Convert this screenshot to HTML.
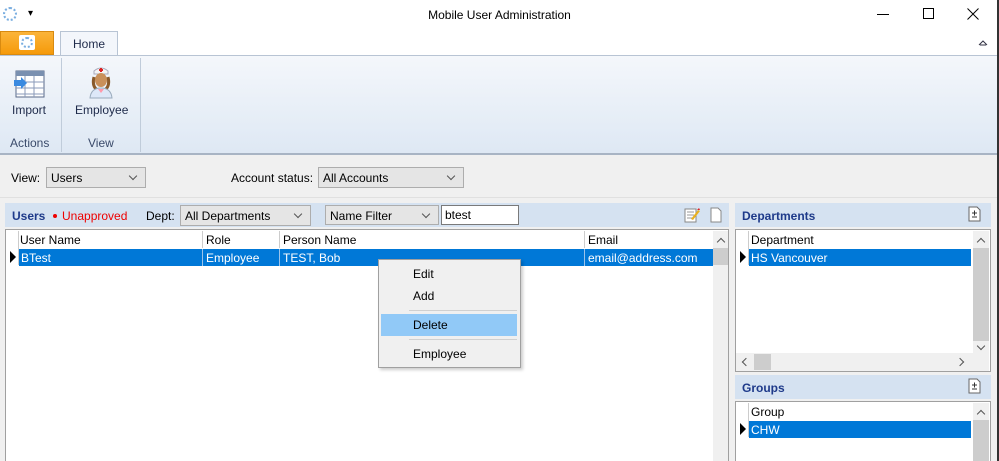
<!DOCTYPE html>
<html style="width:999px;height:461px;overflow:hidden"><head><style>
*{box-sizing:border-box;margin:0;padding:0}
body{width:999px;height:461px;overflow:hidden;background:#f0f0f0;font-family:"Liberation Sans",sans-serif;font-size:12px;color:#000;position:relative}
.a{position:absolute}
.combo{position:absolute;background:#e5e5e5;border:1px solid #adadad;padding:3px 4px;font-size:12px}
.combo:after{content:"";position:absolute;right:9px;top:5px;width:5px;height:5px;border-right:1px solid #555;border-bottom:1px solid #555;transform:rotate(45deg)}
.hdr{position:absolute;background:#d5e2f1;color:#1e3a8a;font-weight:bold;font-size:12px}
.grid{position:absolute;background:#fff;border:1px solid #a0a0a0}
.sel{position:absolute;background:#0078d7;color:#fff;height:17px;line-height:16px}
.arrow{position:absolute;width:0;height:0;border-top:6px solid transparent;border-bottom:6px solid transparent;border-left:6px solid #000}
.vs{position:absolute;background:#f0f0f0}
.up,.dn{position:absolute;width:6px;height:6px;border-left:1.5px solid #555;border-top:1.5px solid #555}
.up{transform:rotate(45deg)}
.dn{transform:rotate(225deg)}
.lt,.rt{position:absolute;width:6px;height:6px;border-left:1.5px solid #555;border-top:1.5px solid #555}
.lt{transform:rotate(-45deg)}
.rt{transform:rotate(135deg)}
</style></head><body>
<div class="a" style="left:0;top:0;width:999px;height:31px;background:#fff"></div>
<div class="a" style="left:3px;top:7px;width:14px;height:14px;border:2px dotted #7aaee0;border-radius:50%"></div>
<div class="a" style="left:28px;top:8px;font-size:10px">▾</div>
<div class="a" style="left:0;top:8px;width:999px;text-align:center;font-size:12px">Mobile User Administration</div>
<div class="a" style="left:877px;top:14px;width:12px;height:1px;background:#000"></div>
<div class="a" style="left:923px;top:8px;width:11px;height:11px;border:1px solid #000"></div>
<svg class="a" style="left:967px;top:8px" width="12" height="12"><path d="M0.5 0.5L11.5 11.5M11.5 0.5L0.5 11.5" stroke="#000"/></svg>
<div class="a" style="left:0;top:31px;width:999px;height:25px;background:#fff"></div>
<div class="a" style="left:0;top:31px;width:54px;height:24px;background:linear-gradient(#fbb43a,#f59a0a);border:1px solid #d88a10"></div>
<div class="a" style="left:19px;top:35px;width:16px;height:15px;background:#fff;border-radius:2px"><div style="margin:2px;width:12px;height:11px;border:2px dotted #7aaee0;border-radius:50%"></div></div>
<div class="a" style="left:60px;top:31px;width:58px;height:25px;background:#f3f6fb;border:1px solid #b8c4d4;border-bottom:none;text-align:center;line-height:24px;color:#1e2a4a;font-size:12px">Home</div>
<svg class="a" style="left:978px;top:39px" width="10" height="7"><path d="M1 6L5 2L9 6M2 6h6" stroke="#334" fill="none"/></svg>
<div class="a" style="left:0;top:55px;width:999px;height:100px;background:linear-gradient(#f4f7fb,#dee8f4);border-top:1px solid #b8c4d4;border-bottom:2px solid #a8b4c4"></div>
<div class="a" style="left:61px;top:58px;width:1px;height:94px;background:#c0ccda"></div>
<div class="a" style="left:140px;top:58px;width:1px;height:94px;background:#c0ccda"></div>
<svg class="a" style="left:13px;top:70px" width="33" height="28"><rect x="3" y="1" width="28" height="26" fill="#fff" stroke="#5a6a8a"/><rect x="3" y="1" width="28" height="5" fill="#7a90b0"/><path d="M3 12h28M3 18h28M3 24h28M12 6v21M21 6v21" stroke="#8a9ab8"/><path d="M1 10h7v-3l6 6-6 6v-3h-7z" fill="#3a8ae0"/></svg>
<div class="a" style="left:12px;top:103px;color:#1e2a4a">Import</div>
<div class="a" style="left:10px;top:136px;color:#3a4a6a">Actions</div>
<svg class="a" style="left:88px;top:65px" width="26" height="34"><path d="M6 6q7-6 14 0v3h-14z" fill="#f4f4f4" stroke="#aab"/><path d="M12 3h2v4h-2zM11 4h4v2h-4z" fill="#d22"/><ellipse cx="13" cy="15" rx="6" ry="7" fill="#c9905a"/><path d="M6 12q-2 8 2 12M20 12q2 8-2 12" stroke="#8a5a2a" stroke-width="3" fill="none"/><path d="M2 33q1-10 11-10 10 0 11 10z" fill="#dde8f8" stroke="#9ab"/><path d="M10 24l3 4 3-4" fill="#f9a"/></svg>
<div class="a" style="left:75px;top:103px;color:#1e2a4a">Employee</div>
<div class="a" style="left:88px;top:136px;color:#3a4a6a">View</div>
<div class="a" style="left:11px;top:171px">View:</div>
<div class="combo" style="left:46px;top:167px;width:100px;height:21px">Users</div>
<div class="a" style="left:231px;top:171px">Account status:</div>
<div class="combo" style="left:318px;top:167px;width:146px;height:21px">All Accounts</div>
<div class="a" style="left:0;top:197px;width:999px;height:1px;background:#e0e0e0"></div>
<div class="hdr" style="left:5px;top:203px;width:724px;height:24px"></div>
<div class="a" style="left:12px;top:209px;color:#1e3a8a;font-weight:bold;font-size:12px">Users</div>
<div class="a" style="left:53px;top:214px;width:4px;height:4px;border-radius:50%;background:#e00"></div>
<div class="a" style="left:62px;top:209px;color:#e00">Unapproved</div>
<div class="a" style="left:146px;top:209px">Dept:</div>
<div class="combo" style="left:180px;top:205px;width:131px;height:21px">All Departments</div>
<div class="combo" style="left:325px;top:205px;width:114px;height:20px">Name Filter</div>
<div class="a" style="left:441px;top:205px;width:78px;height:20px;background:#fff;border:1px solid #7a7a7a;padding:2px 3px">btest</div>
<svg class="a" style="left:684px;top:207px" width="16" height="16"><rect x="1" y="2" width="11" height="13" fill="#fff" stroke="#888"/><path d="M3 5h7M3 8h7M3 11h6" stroke="#999"/><path d="M7 12l7-9 2 1-7 9z" fill="#e8b020"/><path d="M13 3l2-2 1 2z" fill="#d22"/></svg>
<svg class="a" style="left:710px;top:207px" width="12" height="16"><path d="M1 1h7l3 3v11h-10z" fill="#fff" stroke="#888"/></svg>
<div class="grid" style="left:5px;top:229px;width:724px;height:240px"></div>
<div class="a" style="left:18px;top:231px;width:1px;height:34px;background:#ccc"></div>
<div class="a" style="left:20px;top:233px">User Name</div>
<div class="a" style="left:202px;top:231px;width:1px;height:17px;background:#ccc"></div>
<div class="a" style="left:206px;top:233px">Role</div>
<div class="a" style="left:279px;top:231px;width:1px;height:17px;background:#ccc"></div>
<div class="a" style="left:283px;top:233px">Person Name</div>
<div class="a" style="left:584px;top:231px;width:1px;height:17px;background:#ccc"></div>
<div class="a" style="left:588px;top:233px">Email</div>
<div class="sel" style="left:19px;top:249px;width:694px"></div>
<div class="a" style="left:21px;top:251px;color:#fff">BTest</div>
<div class="a" style="left:202px;top:249px;width:1px;height:17px;background:#9cc3ea"></div>
<div class="a" style="left:206px;top:251px;color:#fff">Employee</div>
<div class="a" style="left:279px;top:249px;width:1px;height:17px;background:#9cc3ea"></div>
<div class="a" style="left:283px;top:251px;color:#fff">TEST, Bob</div>
<div class="a" style="left:584px;top:249px;width:1px;height:17px;background:#9cc3ea"></div>
<div class="a" style="left:588px;top:251px;color:#fff">email@address.com</div>
<div class="arrow" style="left:10px;top:251px"></div>
<div class="vs" style="left:713px;top:231px;width:15px;height:240px"></div>
<div class="a" style="left:713px;top:248px;width:15px;height:17px;background:#cdcdcd"></div>
<div class="up" style="left:718px;top:239px"></div>
<div class="a" style="left:378px;top:259px;width:143px;height:109px;background:#f0f0f0;border:1px solid #a0a0a0;box-shadow:2px 2px 3px rgba(0,0,0,.2)"></div>
<div class="a" style="left:413px;top:267px">Edit</div>
<div class="a" style="left:413px;top:289px">Add</div>
<div class="a" style="left:409px;top:310px;width:108px;height:1px;background:#d0d0d0"></div>
<div class="a" style="left:381px;top:314px;width:136px;height:22px;background:#91c9f7"></div>
<div class="a" style="left:413px;top:318px">Delete</div>
<div class="a" style="left:409px;top:339px;width:108px;height:1px;background:#d0d0d0"></div>
<div class="a" style="left:413px;top:347px">Employee</div>
<div class="hdr" style="left:735px;top:203px;width:256px;height:24px"></div>
<div class="a" style="left:742px;top:209px;color:#1e3a8a;font-weight:bold">Departments</div>
<svg class="a" style="left:968px;top:206px" width="13" height="16"><path d="M1 1h8l3 3v11h-11z" fill="#fff" stroke="#666"/><path d="M4 7h5M6.5 4.5v5M4 11h5" stroke="#333"/></svg>
<div class="grid" style="left:735px;top:229px;width:256px;height:143px"></div>
<div class="a" style="left:748px;top:231px;width:1px;height:34px;background:#ccc"></div>
<div class="a" style="left:751px;top:233px">Department</div>
<div class="sel" style="left:749px;top:249px;width:222px"></div>
<div class="a" style="left:751px;top:251px;color:#fff">HS Vancouver</div>
<div class="arrow" style="left:740px;top:251px"></div>
<div class="vs" style="left:973px;top:231px;width:16px;height:123px"></div>
<div class="a" style="left:973px;top:248px;width:16px;height:93px;background:#cdcdcd"></div>
<div class="up" style="left:978px;top:239px"></div>
<div class="dn" style="left:978px;top:343px"></div>
<div class="vs" style="left:736px;top:353px;width:253px;height:18px"></div>
<div class="a" style="left:754px;top:354px;width:17px;height:16px;background:#cdcdcd"></div>
<div class="lt" style="left:743px;top:359px"></div>
<div class="rt" style="left:957px;top:359px"></div>
<div class="hdr" style="left:735px;top:375px;width:256px;height:24px"></div>
<div class="a" style="left:742px;top:381px;color:#1e3a8a;font-weight:bold">Groups</div>
<svg class="a" style="left:968px;top:378px" width="13" height="16"><path d="M1 1h8l3 3v11h-11z" fill="#fff" stroke="#666"/><path d="M4 7h5M6.5 4.5v5M4 11h5" stroke="#333"/></svg>
<div class="grid" style="left:735px;top:401px;width:256px;height:70px"></div>
<div class="a" style="left:748px;top:403px;width:1px;height:34px;background:#ccc"></div>
<div class="a" style="left:751px;top:405px">Group</div>
<div class="sel" style="left:749px;top:421px;width:222px"></div>
<div class="a" style="left:751px;top:423px;color:#fff">CHW</div>
<div class="arrow" style="left:740px;top:423px"></div>
<div class="vs" style="left:973px;top:403px;width:16px;height:70px"></div>
<div class="a" style="left:973px;top:420px;width:16px;height:50px;background:#cdcdcd"></div>
<div class="up" style="left:978px;top:411px"></div>
<div class="a" style="left:997px;top:0;width:2px;height:461px;background:#333"></div>
</body></html>
